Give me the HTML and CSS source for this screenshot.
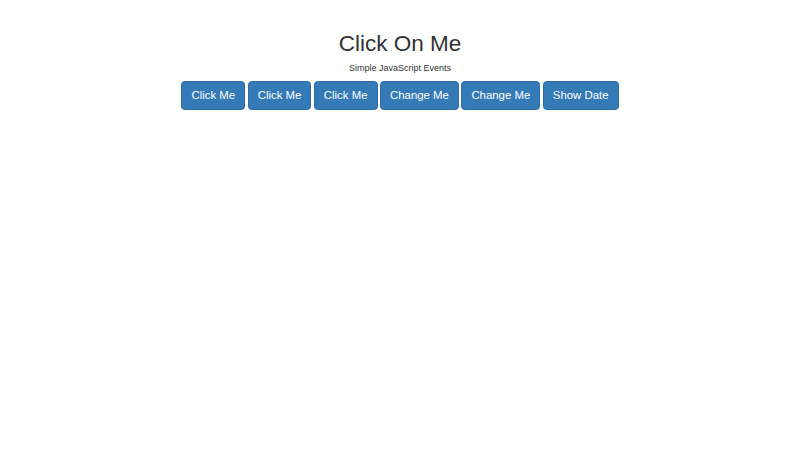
FILE: index.html
```html
<!DOCTYPE html>
<html>
<head>
<meta charset="utf-8">
<link rel="stylesheet" href="styles.css">
</head>
<body>
<div class="page">
  <h1 class="title">Click On Me</h1>
  <p class="subtitle">Simple JavaScript Events</p>
  <div class="buttons">
    <button class="btn">Click Me</button>
    <button class="btn">Click Me</button>
    <button class="btn">Click Me</button>
    <button class="btn">Change Me</button>
    <button class="btn">Change Me</button>
    <button class="btn">Show Date</button>
  </div>
</div>
</body>
</html>
```
FILE: styles.css
```css
html, body {
  margin: 0;
  padding: 0;
  background: #fff;
}
body {
  font-family: "Liberation Sans", Arial, Helvetica, sans-serif;
  color: #333;
}
.page {
  padding-top: 31px;
  text-align: center;
}
.title {
  margin: 0;
  font-size: 22.5px;
  line-height: 25px;
  font-weight: 500;
  color: #333;
}
.subtitle {
  margin: 6px 0 0;
  font-size: 9px;
  line-height: 12.5px;
}
.buttons {
  margin-top: 6.5px;
  display: flex;
  justify-content: center;
  gap: 2.5px;
}
.btn {
  font-family: "Liberation Sans", Arial, Helvetica, sans-serif;
  font-size: 11.4px;
  line-height: 14.5px;
  padding: 6px 9px;
  color: #fff;
  background: #337ab7;
  border: 1px solid #2e6da4;
  border-radius: 3.75px;
  cursor: pointer;
}
```
